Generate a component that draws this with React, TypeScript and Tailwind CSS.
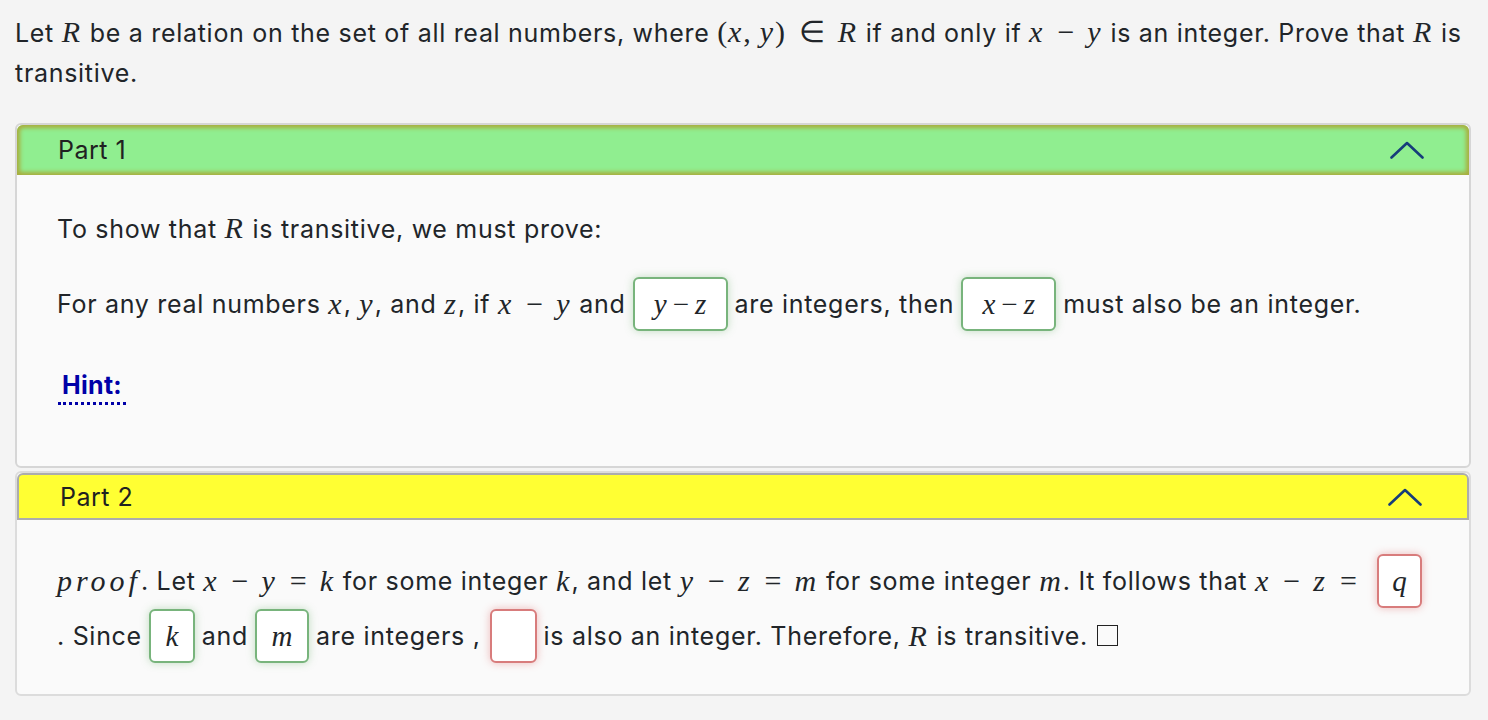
import React from 'react';

const M = ({ children, className = '' }: { children: React.ReactNode; className?: string }) => (
  <span className={`font-['Liberation_Serif',serif] italic text-[30px] leading-none tracking-[2px] ${className}`}>{children}</span>
);

const Op = ({ children }: { children: React.ReactNode }) => (
  <span className="font-['Liberation_Serif',serif] text-[30px] leading-none tracking-normal mx-[13px]">{children}</span>
);

function AnswerBox({ children, ok, w }: { children?: React.ReactNode; ok: boolean; w: string }) {
  return (
    <span
      className={`mx-[7px] inline-flex h-[54px] items-center justify-center rounded-md border-2 bg-white font-['Liberation_Serif',serif] text-[29px] italic tracking-normal ${w} ${
        ok
          ? 'border-[#78b47c] shadow-[0_0_8px_rgba(90,170,90,0.35)]'
          : 'border-[#d87c7c] shadow-[0_0_8px_rgba(220,90,90,0.4)]'
      }`}
    >
      {children}
    </span>
  );
}

function Chevron() {
  return (
    <svg width="34" height="18" viewBox="0 0 34 18" fill="none">
      <polyline points="1.5,16.5 17,2 32.5,16.5" stroke="#163d7a" strokeWidth="2.6" strokeLinecap="round" strokeLinejoin="round" />
    </svg>
  );
}

function Header({ title, green }: { title: string; green: boolean }) {
  return (
    <div
      className={`flex items-center justify-between rounded-t-md pl-[41px] pr-[45px] ${
        green
          ? 'h-[50px] bg-[#90ee90] shadow-[inset_0_0_4px_3px_#a9ac3c]'
          : 'h-[47px] border-2 border-[#acacac] bg-[#ffff33]'
      }`}
    >
      <span className="text-[25px] tracking-[0.5px] text-[#212121]">{title}</span>
      <Chevron />
    </div>
  );
}

export default function App() {
  return (
    <div className="min-h-[720px] bg-[#f4f4f4] px-[15px] pt-[13px] font-['Inter',sans-serif] text-[25px] leading-[40px] tracking-[0.7px] text-[#212529]">
      <p>
        <span className="whitespace-nowrap">
          Let <M>R</M> be a relation on the set of all real numbers, where{' '}
          <span className="font-['Liberation_Serif',serif] text-[30px] leading-none">(</span>
          <M>x</M>
          <span className="font-['Liberation_Serif',serif] text-[30px] leading-none">, </span>
          <M>y</M>
          <span className="font-['Liberation_Serif',serif] text-[30px] leading-none">)</span>
          <Op>∈</Op>
          <M>R</M> if and only if <M>x</M>
          <Op>−</Op>
          <M>y</M> is an integer. Prove that <M>R</M> is
        </span>
        <br />
        transitive.
      </p>

      <div className="mt-[30px] w-[1456px] overflow-hidden rounded-md border-2 border-[#d6d6d6] bg-[#fafafa]">
        <Header title="Part 1" green />
        <div className="px-[40px] pt-[34px] pb-[61px]">
          <p>
            To show that <M>R</M> is transitive, we must prove:
          </p>
          <div className="mt-[28px] flex h-[54px] items-center whitespace-pre">
            For any real numbers <M>x</M>, <M>y</M>, and <M>z</M>, if <M>x</M>
            <Op>−</Op>
            <M>y</M> and
            <AnswerBox ok w="w-[95px]">
              y<span className="not-italic mx-[6px]">−</span>z
            </AnswerBox>
            are integers, then
            <AnswerBox ok w="w-[95px]">
              x<span className="not-italic mx-[6px]">−</span>z
            </AnswerBox>
            must also be an integer.
          </div>
          <div className="mt-[34px] pl-[1px]">
            <span className="inline-block border-b-[3px] border-dotted border-[#0000a8] px-[4px] leading-[34px] font-bold tracking-[0.3px] text-[#0000a8]">
              Hint:
            </span>
          </div>
        </div>
      </div>

      <div className="mt-[3px] w-[1456px] overflow-hidden rounded-md border-2 border-[#dcdcdc] bg-[#fafafa]">
        <Header title="Part 2" green={false} />
        <div className="px-[40px] pt-[33px] pb-[31px]">
          <div className="flex h-[55px] items-center whitespace-pre">
            <M className="tracking-[4px]">proof</M>. Let <M>x</M>
            <Op>−</Op>
            <M>y</M>
            <Op>=</Op>
            <M>k</M> for some integer <M>k</M>, and let <M>y</M>
            <Op>−</Op>
            <M>z</M>
            <Op>=</Op>
            <M>m</M> for some integer <M>m</M>. It follows that <M>x</M>
            <Op>−</Op>
            <M>z</M>
            <Op>=</Op>
            <AnswerBox ok={false} w="w-[47px]">q</AnswerBox>
          </div>
          <div className="flex h-[55px] items-center whitespace-pre">
            . Since
            <AnswerBox ok w="w-[46px]">k</AnswerBox>
            and
            <AnswerBox ok w="w-[54px]">m</AnswerBox>
            are integers ,
            <span className="ml-[2px] flex">
              <AnswerBox ok={false} w="w-[47px]" />
            </span>
            is also an integer. Therefore, <M>R</M> is transitive.{' '}
            <span className="ml-[1px] inline-block h-[21px] w-[21px] border-[1.5px] border-[#222]" />
          </div>
        </div>
      </div>
    </div>
  );
}
